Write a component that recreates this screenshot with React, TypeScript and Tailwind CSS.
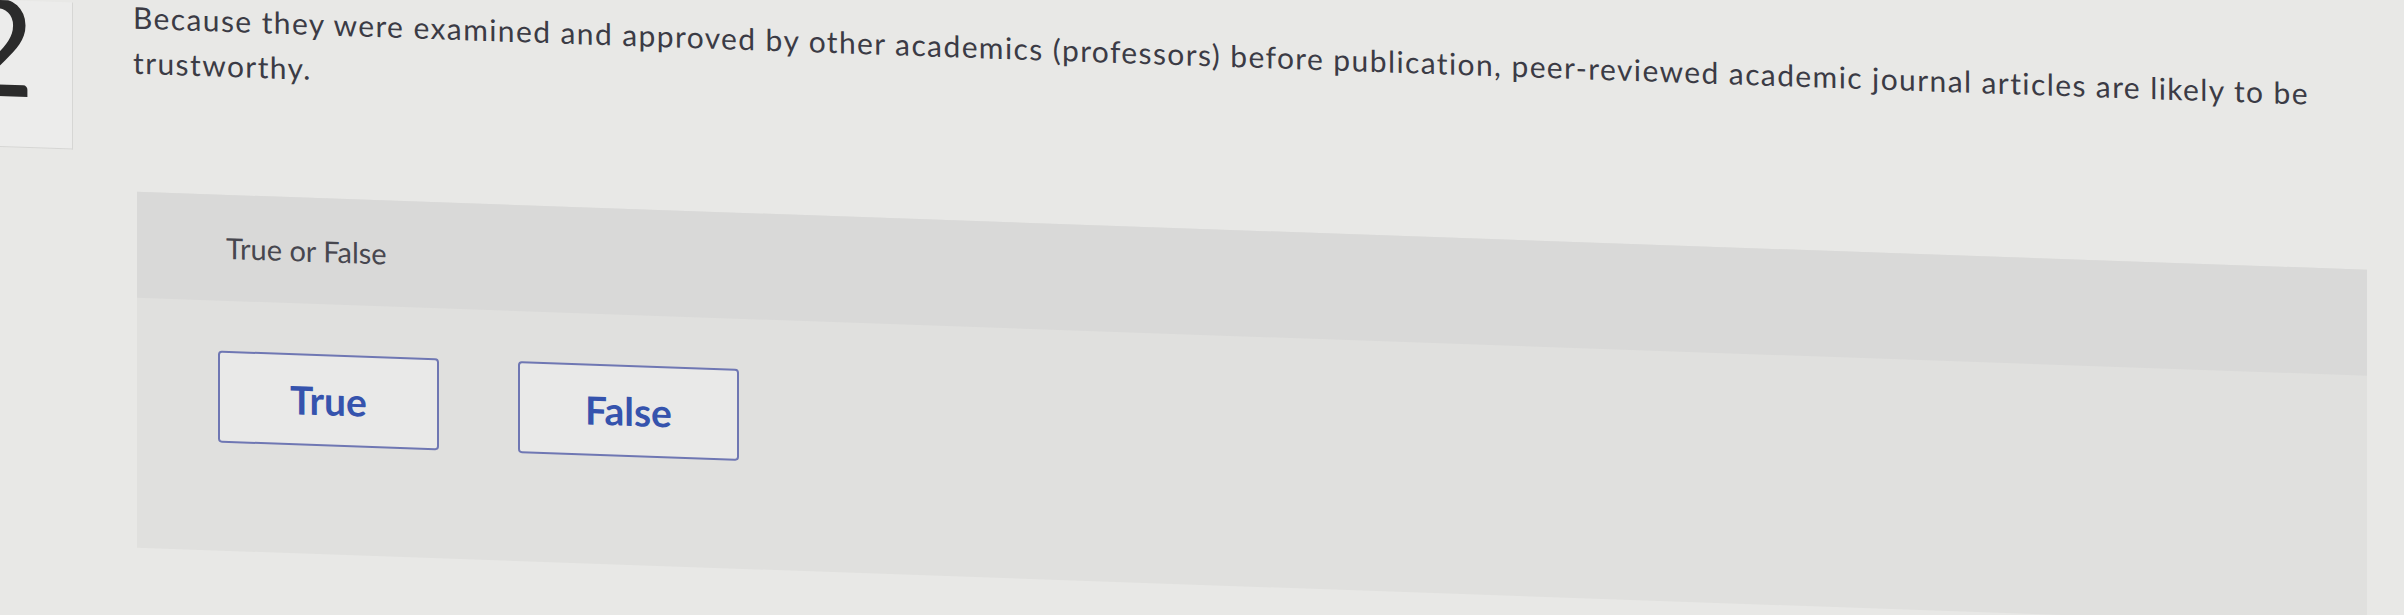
export default function App() {
  return (
    <div className="w-[2404px] h-[615px] overflow-hidden bg-[#e8e8e6] font-['Lato','Open_Sans',sans-serif]">
      {/* photo of the screen is tilted a little, right side lower */}
      <div className="skew-y-2 origin-top-left">
        <div className="flex items-start">
          {/* question number column */}
          <div className="w-[73px] h-[147px] shrink-0 overflow-hidden bg-[#ececeb] border-r border-b border-[#d6d6d4]">
            <div className="-ml-[44px] -mt-[24px] text-[136px] leading-none font-normal text-[#2b2b2b]">2</div>
          </div>

          <div className="ml-[60px] text-[30px] leading-[24px] tracking-[1.4px] text-[#3b3b45] whitespace-nowrap">
            <p>
              Because they were examined and approved by other academics (professors) before publication, peer-reviewed academic journal articles are likely to be
            </p>
            <p className="mt-[21px]">trustworthy.</p>
          </div>
        </div>

        {/* answer panel */}
        <div className="ml-[137px] mt-[40px] w-[2230px] h-[356px] bg-[#e0e0de]">
          <div className="h-[106px] bg-[#d9d9d8] flex items-center pl-[89px]">
            <span className="text-[29px] text-[#47474f]">True or False</span>
          </div>

          <div className="flex gap-[79px] pl-[81px] pt-[50px]">
            <button className="w-[221px] h-[92px] rounded-[4px] border-2 border-[#6f77b3] bg-[#e9e9e8] text-[39px] font-bold text-[#3553ad]">
              True
            </button>
            <button className="w-[221px] h-[92px] rounded-[4px] border-2 border-[#6f77b3] bg-[#e9e9e8] text-[39px] font-bold text-[#3553ad]">
              False
            </button>
          </div>
        </div>
      </div>
    </div>
  );
}
